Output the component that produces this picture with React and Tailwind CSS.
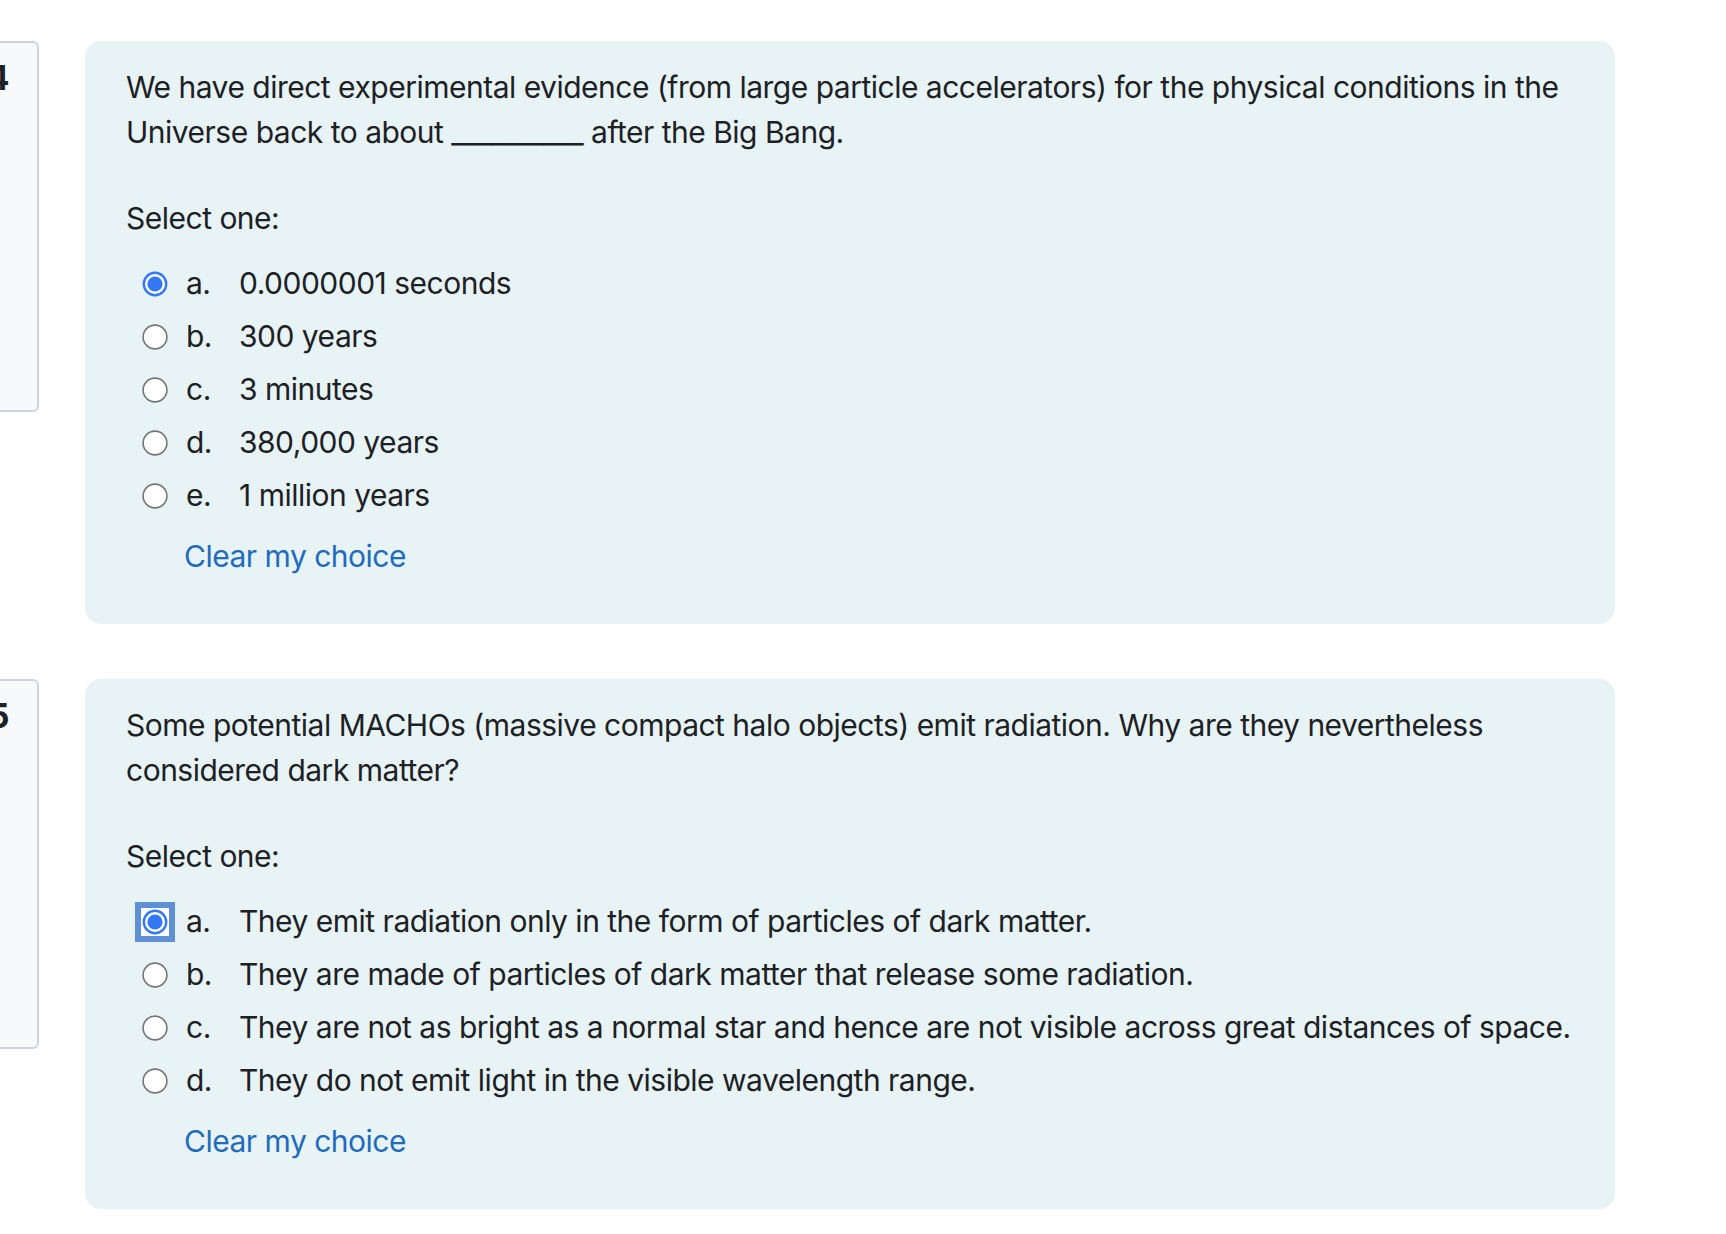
import React from 'react';

const questions = [
  {
    no: 4,
    text: (
      <>
        We have direct experimental evidence (from large particle accelerators) for the physical conditions in the
        Universe back to about __________ after the Big Bang.
      </>
    ),
    options: ['0.0000001 seconds', '300 years', '3 minutes', '380,000 years', '1 million years'],
    selected: 0,
    focused: false,
    infoHeight: 'h-[371px]',
  },
  {
    no: 5,
    text: (
      <>
        Some potential MACHOs (massive compact halo objects) emit radiation. Why are they nevertheless considered dark
        matter?
      </>
    ),
    options: [
      'They emit radiation only in the form of particles of dark matter.',
      'They are made of particles of dark matter that release some radiation.',
      'They are not as bright as a normal star and hence are not visible across great distances of space.',
      'They do not emit light in the visible wavelength range.',
    ],
    selected: 0,
    focused: true,
    infoHeight: 'h-[370px]',
  },
];

const letters = ['a.', 'b.', 'c.', 'd.', 'e.'];

function Radio({ checked }) {
  return (
    <svg width="26" height="26" viewBox="0 0 26 26" className="block">
      {checked ? (
        <>
          <circle cx="13" cy="13" r="12.4" fill="#3478f6" />
          <circle cx="13" cy="13" r="10" fill="#ffffff" />
          <circle cx="13" cy="13" r="7.6" fill="#3478f6" />
        </>
      ) : (
        <circle cx="13" cy="13" r="11.9" fill="#ffffff" stroke="#767676" strokeWidth="1.6" />
      )}
    </svg>
  );
}

function Option({ letter, label, checked, focused }) {
  return (
    <div className="flex items-center h-[53px] whitespace-nowrap">
      <div className="w-[60px] shrink-0 flex items-center pl-[16px]">
        {focused ? (
          <div className="-ml-[7px] p-[6px] bg-[#5f8fd5]">
            <div className="bg-white p-px">
              <Radio checked={checked} />
            </div>
          </div>
        ) : (
          <Radio checked={checked} />
        )}
      </div>
      <span className="w-[53px] shrink-0">{letter}</span>
      <span>{label}</span>
    </div>
  );
}

function Question({ q }) {
  return (
    <div className="flex items-start">
      <div
        className={`shrink-0 w-[120px] -ml-[81px] ${q.infoHeight} bg-[#f8f9fa] border-2 border-[#ced4da] rounded-[6px] pt-[12px] pr-[28px] text-right`}
      >
        <h3 className="text-[34px] leading-[45px] font-bold text-[#1d2125]">{q.no}</h3>
      </div>
      <div className="ml-[46px] w-[1530px] shrink-0 bg-[#e7f3f5] rounded-[16px] pl-[41px] pr-[40px] pt-[24px] pb-[45px]">
        <p className="mb-[41px]">{q.text}</p>
        <p>Select one:</p>
        <div className="mt-[16px]">
          {q.options.map((opt, i) => (
            <Option
              key={i}
              letter={letters[i]}
              label={opt}
              checked={q.selected === i}
              focused={q.focused && q.selected === i}
            />
          ))}
        </div>
        <div className="mt-[12px] pl-[58px]">
          <a href="#" className="text-[#1f6bbd]">Clear my choice</a>
        </div>
      </div>
    </div>
  );
}

export default function App() {
  return (
    <div className="min-h-screen bg-white overflow-hidden pt-[41px] text-[30px] leading-[45px] tracking-[-0.5px] text-[#1d2125] font-['Inter','Noto_Sans',sans-serif]">
      <div className="flex flex-col gap-[55px]">
        {questions.map((q) => (
          <Question key={q.no} q={q} />
        ))}
      </div>
    </div>
  );
}
